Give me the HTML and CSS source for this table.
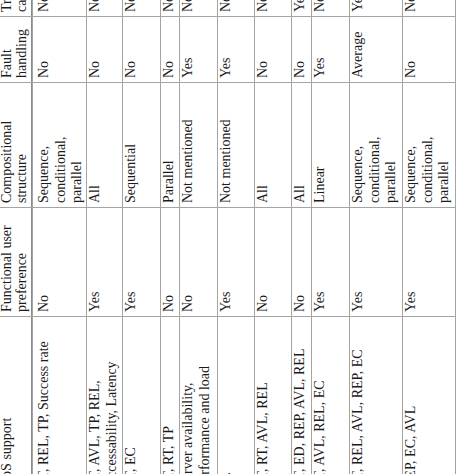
FILE: index.html
```html
<!DOCTYPE html>
<html lang="en">
<head>
<meta charset="utf-8">
<title>Rotated table</title>
<link rel="stylesheet" href="styles.css">
</head>
<body>
<div class="page">
  <div class="sheet">
    <div class="cell head">QoS support</div>
    <div class="cell head">Functional user<br>preference</div>
    <div class="cell head">Compositional<br>structure</div>
    <div class="cell head">Fault<br>handling</div>
    <div class="cell head">Transactional<br>capability</div>

    <div class="cell first">RT, REL, TP, Success rate</div>
    <div class="cell first">No</div>
    <div class="cell first">Sequence,<br>conditional,<br>parallel</div>
    <div class="cell first">No</div>
    <div class="cell first">No</div>

    <div class="cell">RT, AVL, TP, REL,<br>Accessability, Latency</div>
    <div class="cell">Yes</div>
    <div class="cell">All</div>
    <div class="cell">No</div>
    <div class="cell">No</div>

    <div class="cell">RT, EC</div>
    <div class="cell">Yes</div>
    <div class="cell">Sequential</div>
    <div class="cell">No</div>
    <div class="cell">No</div>

    <div class="cell">ET, RT, TP</div>
    <div class="cell">No</div>
    <div class="cell">Parallel</div>
    <div class="cell">No</div>
    <div class="cell">No</div>

    <div class="cell">Server availability,<br>performance and load</div>
    <div class="cell">No</div>
    <div class="cell">Not mentioned</div>
    <div class="cell">Yes</div>
    <div class="cell">No</div>

    <div class="cell">M.</div>
    <div class="cell">Yes</div>
    <div class="cell">Not mentioned</div>
    <div class="cell">Yes</div>
    <div class="cell">No</div>

    <div class="cell">ET, RT, AVL, REL</div>
    <div class="cell">No</div>
    <div class="cell">All</div>
    <div class="cell">No</div>
    <div class="cell">No</div>

    <div class="cell">RT, ED, REP, AVL, REL</div>
    <div class="cell">No</div>
    <div class="cell">All</div>
    <div class="cell">No</div>
    <div class="cell">Yes</div>

    <div class="cell">RT, AVL, REL, EC</div>
    <div class="cell">Yes</div>
    <div class="cell">Linear</div>
    <div class="cell">Yes</div>
    <div class="cell">No</div>

    <div class="cell">RT, REL, AVL, REP, EC</div>
    <div class="cell">Yes</div>
    <div class="cell">Sequence,<br>conditional,<br>parallel</div>
    <div class="cell">Average</div>
    <div class="cell">Yes</div>

    <div class="cell">REP, EC, AVL</div>
    <div class="cell">Yes</div>
    <div class="cell">Sequence,<br>conditional,<br>parallel</div>
    <div class="cell">No</div>
    <div class="cell">No</div>
  </div>
</div>
</body>
</html>
```

FILE: styles.css
```css
html, body {
  margin: 0;
  padding: 0;
  background: #ffffff;
}

.page {
  position: relative;
  width: 474px;
  height: 474px;
  overflow: hidden;
  background: #ffffff;
}

.sheet {
  display: grid;
  width: 576px;
  grid-template-columns: 175px 108px 124px 65px 100px;
  grid-template-rows: 32px 53px 35px 37px 18px 37px 36px 36px 19px 37px 52px 52px;
  gap: 1px;
  padding-bottom: 1px;
  background: #a4a4a4;
  transform-origin: 0 0;
  transform: translateY(492px) rotate(-90deg);
  font-family: "Liberation Serif", "Times New Roman", serif;
  font-size: 14px;
  color: #1b1b1b;
}

.cell {
  background: #ffffff;
  padding: 0 4px 0 4px;
  line-height: 16.5px;
  white-space: nowrap;
  overflow: hidden;
}

.head {
  line-height: 14.5px;
  border-bottom: 1px solid #8a8a8a;
}

.first {
  padding-top: 3px;
}
```
